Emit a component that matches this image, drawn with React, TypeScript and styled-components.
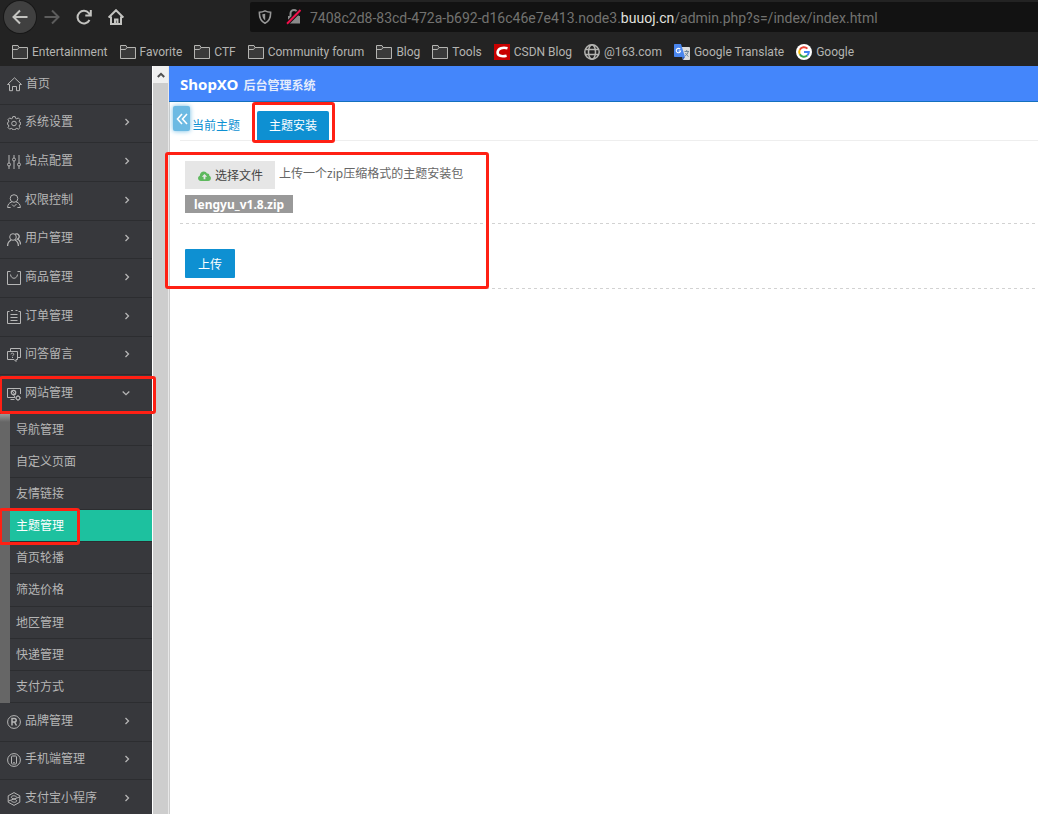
import React from 'react';
import styled, { createGlobalStyle, css } from 'styled-components';

const GlobalStyle = createGlobalStyle`
  *, *::before, *::after { box-sizing: border-box; }
  body {
    margin: 0;
    background: #fff;
    color: #666;
    font: 12px/18px "Noto Sans", "Noto Sans CJK SC", sans-serif;
  }
  button, a, input { font: inherit; color: inherit; text-decoration: none; }
  button { border: 0; padding: 0; background: none; cursor: pointer; }
  ul { list-style: none; margin: 0; padding: 0; }
  svg { display: block; flex: none; }
`;

const Page = styled.div`
  display: flex;
  flex-direction: column;
  height: 100vh;
  overflow: hidden;
`;

const Chrome = styled.header`
  flex: none;
  background: #232323;
  color: #b4b4b1;
  font-family: Roboto, "Noto Sans", sans-serif;
`;

const Toolbar = styled.div`
  display: flex;
  align-items: center;
  height: 36px;
  padding: 0 0 2px 4px;
`;

const NavButton = styled.button<{ $round?: boolean; $dim?: boolean }>`
  display: grid;
  place-items: center;
  width: 32px;
  height: 32px;
  border-radius: 50%;
  color: ${p => (p.$dim ? '#5c5c5c' : '#c3c3c0')};
  background: ${p => (p.$round ? '#404040' : 'transparent')};
  box-shadow: ${p => (p.$round ? '0 0 0 1px #181818' : 'none')};
`;

const AddressBar = styled.div`
  display: flex;
  align-items: center;
  flex: 1;
  height: 30px;
  margin-left: 118px;
  padding-left: 8px;
  gap: 14px;
  border-radius: 2px 0 0 2px;
  background: #121212;
  font-size: 14px;
  color: #727270;
  white-space: nowrap;
`;

const Url = styled.span`
  margin-left: -6px;
  padding-top: 2px;
  b { font-weight: 400; color: #e0e0de; }
`;

const Bookmarks = styled.nav`
  display: flex;
  align-items: center;
  height: 30px;
  padding: 2px 0 0 12px;
  gap: 12px;
`;

const Bookmark = styled.a`
  display: flex;
  align-items: center;
  gap: 4px;
  white-space: nowrap;
`;

const Body = styled.div`
  display: flex;
  flex: 1;
  min-height: 0;
`;

const Sidebar = styled.nav`
  width: 152px;
  flex: none;
  background: #37383c;
  color: #b6b6b6;
`;

const MenuItem = styled.li`
  position: relative;
`;

const MenuLink = styled.a`
  display: flex;
  align-items: center;
  gap: 4px;
  height: calc(116px / 3);
  padding: 0 22px 2px 7px;
  border-bottom: 1px solid #2c2d30;
  white-space: nowrap;
  span { flex: 1; }
  > svg:first-child { margin-top: 2px; }
`;

const SubMenu = styled.ul`
  padding-left: 10px;
  background: linear-gradient(#999, #666 8px);
`;

const SubLink = styled.a<{ $active?: boolean }>`
  display: block;
  height: calc(289px / 9);
  padding: 7px 6px 0;
  border-bottom: 1px solid #2c2d30;
  background: #37383c;
  ${p => p.$active && css`background: #1dc19f; color: #fff;`}
`;

const ScrollBar = styled.div`
  display: flex;
  flex-direction: column;
  width: 17px;
  flex: none;
  border-left: 1px solid #fff;
  border-right: 1px solid #e8e8e8;
  background: #cdcdcd;
`;

const ScrollUp = styled.button`
  display: grid;
  place-items: center;
  height: 17px;
  background: #f0f0f0;
  color: #505050;
`;

const Main = styled.main`
  flex: 1;
  min-width: 0;
  border-left: 1px solid #ccc;
`;

const TitleBar = styled.div`
  display: flex;
  align-items: baseline;
  gap: 5px;
  height: 36px;
  margin-left: -1px;
  padding: 6px 11px 0;
  border-bottom: 1px solid #1470bd;
  background: #4486fb;
  color: #fff;
  font-weight: 700;
`;

const Brand = styled.span`
  font-size: 15px;
  line-height: 24px;
`;

const Subtitle = styled.span`
  color: #e4ecfb;
`;

const TabRow = styled.div`
  display: flex;
  align-items: flex-start;
  padding-left: 3px;
`;

const Collapse = styled.button`
  position: relative;
  display: grid;
  place-items: center;
  flex: none;
  width: 17px;
  height: 25px;
  margin-top: 4px;
  border-radius: 2px;
  background: #6cbae3;
  color: #fff;
  box-shadow: 0 0 5px #6cbae3;
`;

const Tabs = styled.div`
  display: flex;
  flex: 1;
  margin-left: -10px;
  padding: 9px 0 0;
  border-bottom: 1px solid #eee;
`;

const Tab = styled.a<{ $active?: boolean }>`
  position: relative;
  height: 29px;
  padding: 6px 12px;
  margin-right: 5px;
  color: ${p => (p.$active ? '#fff' : '#0e90d2')};
  background: ${p => (p.$active ? '#0e90d2' : 'transparent')};
  border-radius: 2px 2px 0 0;
`;

const Form = styled.form`
  position: relative;
  padding: 20px 0 0 10px;
`;

const dashed = css`
  background: repeating-linear-gradient(90deg, #d2d2d2 0 3px, transparent 3px 6px) left bottom / 100% 1px no-repeat;
`;

const Field = styled.div`
  display: flex;
  flex-direction: column;
  align-items: flex-start;
  gap: 6px;
  padding: 0 0 11px 5px;
  ${dashed}
`;

const FileRow = styled.div`
  display: flex;
  align-items: flex-start;
  gap: 4px;
  p { margin: 4px 0 0; }
`;

const FileButton = styled.button`
  display: flex;
  align-items: center;
  gap: 4px;
  height: 28px;
  padding: 1px 12px 0 13px;
  background: #e6e6e6;
  color: #444;
`;

const FileName = styled.span`
  height: 18px;
  padding: 0 9px;
  background: #999;
  color: #fff;
  line-height: 19px;
  font-weight: 700;
`;

const Actions = styled.div`
  padding: 25px 0 11px 5px;
  ${dashed}
`;

const Submit = styled.button`
  display: block;
  width: 50px;
  height: 29px;
  padding-top: 3px;
  border-radius: 1px;
  background: #0e90d2;
  color: #fff;
`;

const Mark = styled.div<{ $top: number; $left: number; $width: number; $height: number }>`
  position: absolute;
  z-index: 2;
  top: ${p => p.$top}px;
  left: ${p => p.$left}px;
  width: ${p => p.$width}px;
  height: ${p => p.$height}px;
  border: 3px solid #ff2014;
  border-radius: 3px;
  pointer-events: none;
`;

const Line = ({ children, size = 14, view = 14, w = 1 }: { children: React.ReactNode; size?: number; view?: number; w?: number }) => (
  <svg width={size} height={size} viewBox={`0 0 ${view} ${view}`} fill="none" stroke="currentColor" strokeWidth={w} aria-hidden="true">
    {children}
  </svg>
);

const Folder = () => (
  <Line size={16} view={16}>
    <path d="M.5 14.500V1.500h5.500L7 3.500h8.500v11z" fill="#3a3a3a" />
    <path d="M.5 5.500h5l1.500-2" />
  </Line>
);

const Csdn = () => (
  <svg width="16" height="16" viewBox="0 0 16 16" aria-hidden="true">
    <path fill="#c80000" d="M0 0h16v16H0z" />
    <path d="M13.500 4.200C9 3 4 4 3.600 8.200c-.3 4 4.400 4.600 9 3.500" fill="none" stroke="#fff" strokeWidth="2.600" />
  </svg>
);

const Globe = () => (
  <Line size={16} view={16} w={1.5}>
    <circle cx="8" cy="8" r="7.200" />
    <ellipse cx="8" cy="8" rx="3.500" ry="7.200" />
    <path d="M1.500 5.500h13M1.500 10.500h13" />
  </Line>
);

const Translate = () => (
  <svg width="16" height="16" viewBox="0 0 16 16" aria-hidden="true">
    <path fill="#dcdcdc" d="M6 3h9.200a.8.8 0 0 1 .8.800V15.200a.8.8 0 0 1-.8.800H9z" />
    <path fill="#4a86ee" d="M.8 0H7l4 13H.8a.8.8 0 0 1-.8-.8V.8A.8.8 0 0 1 .8 0z" />
    <path fill="#3060c0" d="M8 13h3l-2 3z" />
    <path d="M6.200 5.200a2.200 2.200 0 1 0 .4 1.800H4.600" fill="none" stroke="#fff" strokeWidth="1.100" />
    <path d="M10.500 7.500h4.500M12.700 6v1.500M14.200 7.500c-.4 2-1.500 3.500-3 4.300M11.500 9c.6 1.500 1.600 2.600 3 3.500" fill="none" stroke="#71889a" />
  </svg>
);

const Google = () => (
  <svg width="16" height="16" viewBox="0 0 16 16" fill="none" strokeWidth="2" aria-hidden="true">
    <circle cx="8" cy="8" r="8" fill="#fff" />
    <path d="M11.400 4.600A4.800 4.800 0 0 0 3.800 5.700" stroke="#ea4335" />
    <path d="M3.800 5.700a4.800 4.800 0 0 0 0 4.600" stroke="#fbbc05" />
    <path d="M3.800 10.300a4.800 4.800 0 0 0 7.400 1.300" stroke="#34a853" />
    <path d="M11.200 11.600A4.800 4.800 0 0 0 12.800 8H8" stroke="#4285f4" />
  </svg>
);

const Chevron = ({ down = false }: { down?: boolean }) => (
  <svg width={down ? 8 : 6} height="8" viewBox={down ? '0 0 8 8' : '0 0 6 8'} fill="none" stroke="currentColor" strokeWidth="1.300" aria-hidden="true">
    <path d={down ? 'M.7 2.500 4 5.700l3.300-3.200' : 'M1.500 1l3 3-3 3'} />
  </svg>
);

const icons: Record<string, React.ReactNode> = {
  home: <path d="M.5 7.500 7.500.8l7 6.700h-2v6.200h-3V9.500h-4v4.200h-3V7.500z" />,
  gear: (
    <>
      <path d="M5.800.6h2.400l.4 1.700 1.200.5 1.500-.9 1.700 1.700-.9 1.500.5 1.200 1.100.3v1.900l-1.100.3-.5 1.300.9 1.400-1.700 1.700-1.500-.9-1.200.5-.4 1H5.800l-.4-1-1.200-.5-1.500.9L1 11.500l.9-1.400-.5-1.300-.8-.3V6.600l.8-.3.500-1.200L1 3.600l1.700-1.700 1.500.9 1.200-.5z" />
      <circle cx="7" cy="7.500" r="2.300" />
    </>
  ),
  sliders: (
    <>
      <path d="M2 0v8M2 11v3M7 0v3M7 6v8M12 0v8M12 11v3" />
      <circle cx="2" cy="9.500" r="1.500" /><circle cx="7" cy="4.500" r="1.500" /><circle cx="12" cy="9.500" r="1.500" />
    </>
  ),
  person: (
    <>
      <circle cx="7" cy="4.500" r="3.800" />
      <path d="M4.800 8C2 8.700.8 10.500.6 13.500h3M9.200 8c2.800.7 4 2.500 4.200 5.500h-3M5 10.500l2 2 2.500-2.500" />
    </>
  ),
  users: (
    <>
      <circle cx="6" cy="5" r="3.300" />
      <path d="M.6 14c0-3 1.500-5 3.600-6M7.800 8c2.200.8 3.600 3 3.600 6M8 2.200a2.800 2.800 0 1 1 2.500 5c1.800.8 3 2.800 3 5.300" strokeWidth="1.300" />
    </>
  ),
  bag: <path d="M3.500.500h-3v13h13v-13h-3M3.500 3.500c.5 5 6.500 5 7 0" />,
  order: <path d="M2.500 1.500h-2v12h13v-12h-2M4 .5h2M8.500.5h2M3.500 4.500h7M3.500 7.500h7M3.500 10.500h7" />,
  question: (
    <>
      <path d="M3.500 3.500v-3h10v9h-3M.5 3.500h10v8H9v2l-2-2H.5z" />
      <path d="M4 6.300c0-1.700 3-1.500 2.800 0-.1.900-1.300.9-1.300 1.900M5.500 9v1" />
    </>
  ),
  site: (
    <>
      <path d="M8 10.500H.5v-9h13V7M3.500 12.500h4" />
      <circle cx="6.500" cy="5.500" r="2.200" strokeWidth="1.300" /><path d="M5 3.800l3 3.800M8 10l-1.500-2" />
      <circle cx="11" cy="11" r="1.800" /><path d="M11 8v1M11 13v1M8 11h1M13 11h1M9 9l.7.7M12.300 12.300l.7.700M9 13l.7-.7M12.300 9.700 13 9" />
    </>
  ),
  brand: (
    <>
      <circle cx="7" cy="7" r="6.400" />
      <path d="M5 10.500v-7h2.400c2.400 0 2.400 3.500 0 3.500H5M7.500 7l2 3.500" strokeWidth="1.500" />
    </>
  ),
  phone: (
    <>
      <circle cx="7" cy="7" r="6.400" />
      <rect x="4.500" y="3" width="5" height="8" rx=".8" /><path d="M6.300 9.500h1.400" />
    </>
  ),
  mini: (
    <>
      <path d="M7 .6l5.800 3.200v6.400L7 13.400 1.200 10.200V3.800z" />
      <path d="M9.800 5.200C8 3 4.500 3.500 4.300 5.300c0 1.700 5.400 1.700 5.400 3.500C9.500 10.500 6 11 4.200 8.800M1.500 9l11-4" />
    </>
  ),
};

const topMenu: [string, string][] = [
  ['home', '首页'], ['gear', '系统设置'], ['sliders', '站点配置'], ['person', '权限控制'], ['users', '用户管理'],
  ['bag', '商品管理'], ['order', '订单管理'], ['question', '问答留言'], ['site', '网站管理'],
];
const subMenu = ['导航管理', '自定义页面', '友情链接', '主题管理', '首页轮播', '筛选价格', '地区管理', '快递管理', '支付方式'];
const bottomMenu: [string, string][] = [['brand', '品牌管理'], ['phone', '手机端管理'], ['mini', '支付宝小程序']];

const bookmarks: [string, React.ReactNode][] = [
  ['Entertainment', <Folder />], ['Favorite', <Folder />], ['CTF', <Folder />], ['Community forum', <Folder />],
  ['Blog', <Folder />], ['Tools', <Folder />], ['CSDN Blog', <Csdn />], ['@163.com', <Globe />],
  ['Google Translate', <Translate />], ['Google', <Google />],
];

const Entry = ({ icon, label }: { icon: string; label: string }) => (
  <MenuLink href="#">
    {icon === 'home' ? <Line size={15} view={15}>{icons.home}</Line> : <Line>{icons[icon]}</Line>}
    <span>{label}</span>
    {icon !== 'home' && <Chevron down={icon === 'site'} />}
  </MenuLink>
);

export default function App() {
  return (
    <Page>
      <GlobalStyle />
      <Chrome>
        <Toolbar>
          <NavButton $round aria-label="Back">
            <Line size={16} view={16} w={2}><path d="M15.500 8H1.500M8 1.500 1.500 8 8 14.500" /></Line>
          </NavButton>
          <NavButton $dim aria-label="Forward">
            <Line size={16} view={16} w={2}><path d="M.5 8h14M8 1.500 14.500 8 8 14.500" /></Line>
          </NavButton>
          <NavButton aria-label="Reload">
            <Line size={16} view={16} w={2}><path d="M13.500 11A6.300 6.300 0 1 1 12.800 4.200L14.500 6M14.800 1v5.500H9.300" /></Line>
          </NavButton>
          <NavButton aria-label="Home">
            <Line size={16} view={16} w={2}><path d="M.6 8.500 8 1.200l7.400 7.300M3 7.500V15h10V7.500M7 15v-4.500h2.500V15" /></Line>
          </NavButton>
          <AddressBar>
            <Line size={14} view={14} w={1.6}>
              <path d="M7 .9c2 1 4 1.300 5.600 1.300C12.800 7.500 11 11.500 7 13.200 3 11.500 1.200 7.500 1.400 2.200 3 2.200 5 1.900 7 .9z" stroke="#989898" />
              <path d="M7.200 3.800v6.700C5.300 9.200 4.400 7.200 4.300 4.300c1 0 2-.2 2.900-.5z" fill="#989898" stroke="none" />
            </Line>
            <svg width="16" height="16" viewBox="0 0 16 16" aria-hidden="true">
              <path d="M4.500 7V4.500a3.500 3.500 0 0 1 7 0V7" fill="none" stroke="#8a8a8a" strokeWidth="2" />
              <path d="M2 7h12v7.500H2z" fill="#8a8a8a" />
              <path d="M1 14.500 14.500 1" stroke="#121212" strokeWidth="4" />
              <path d="M1 14.800 14.500 1" stroke="#f0104a" strokeWidth="2" />
            </svg>
            <Url>7408c2d8-83cd-472a-b692-d16c46e7e413.node3.<b>buuoj.cn</b>/admin.php?s=/index/index.html</Url>
          </AddressBar>
        </Toolbar>
        <Bookmarks>
          {bookmarks.map(([label, icon]) => <Bookmark href="#" key={label}>{icon}{label}</Bookmark>)}
        </Bookmarks>
      </Chrome>
      <Body>
        <Sidebar>
          <ul>
            {topMenu.map(([icon, label]) => (
              <MenuItem key={label}>
                <Entry icon={icon} label={label} />
                {icon === 'site' && (
                  <>
                    <Mark $top={1} $left={-1} $width={157} $height={38} />
                    <SubMenu>
                      {subMenu.map(name => (
                        <MenuItem key={name}>
                          <SubLink href="#" $active={name === '主题管理'}>{name}</SubLink>
                          {name === '主题管理' && <Mark $top={-2} $left={-11} $width={81} $height={37} />}
                        </MenuItem>
                      ))}
                    </SubMenu>
                  </>
                )}
              </MenuItem>
            ))}
            {bottomMenu.map(([icon, label]) => (
              <MenuItem key={label}><Entry icon={icon} label={label} /></MenuItem>
            ))}
          </ul>
        </Sidebar>
        <ScrollBar>
          <ScrollUp aria-label="Scroll up">
            <Line size={8} view={8} w={2}><path d="M.8 6 4 2.800 7.200 6" /></Line>
          </ScrollUp>
        </ScrollBar>
        <Main>
          <TitleBar><Brand>ShopXO</Brand><Subtitle>后台管理系统</Subtitle></TitleBar>
          <TabRow>
            <Collapse aria-label="Collapse menu">
              <Line size={12} view={12} w={1.6}><path d="M6 1 1.500 6 6 11M11 1 6.500 6 11 11" /></Line>
            </Collapse>
            <Tabs>
              <Tab href="#">当前主题</Tab>
              <Tab href="#" $active>
                主题安装
                <Mark $top={-9} $left={-5} $width={83} $height={41} />
              </Tab>
            </Tabs>
          </TabRow>
          <Form onSubmit={e => e.preventDefault()}>
            <Field>
              <FileRow>
                <FileButton type="button">
                  <svg width="13" height="10" viewBox="0 0 13 10" aria-hidden="true">
                    <path d="M3 10C-.6 9.800-.8 5.600 1.800 4.800 1.600.2 7.600-1.200 9 2.600c1.600-.5 2.600.8 2.200 2.200C13.800 5.600 13.300 9.800 10.200 10z" fill="#5eb95e" />
                    <path d="M6.500 3 9.200 5.800H7.400V8.200H5.600V5.800H3.800z" fill="#e6e6e6" />
                  </svg>
                  选择文件
                </FileButton>
                <p>上传一个zip压缩格式的主题安装包</p>
              </FileRow>
              <FileName>lengyu_v1.8.zip</FileName>
            </Field>
            <Actions><Submit>上传</Submit></Actions>
            <Mark $top={11} $left={-5} $width={324} $height={137} />
          </Form>
        </Main>
      </Body>
    </Page>
  );
}
